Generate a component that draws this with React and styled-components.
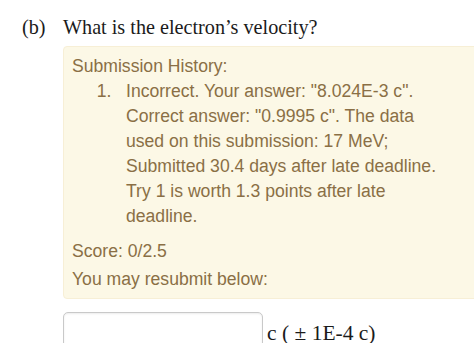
import React from 'react';
import styled, { createGlobalStyle } from 'styled-components';

const GlobalStyle = createGlobalStyle`
  html, body {
    margin: 0;
    padding: 0;
    background: #ffffff;
    overflow: hidden;
  }
  body {
    width: 474px;
    height: 343px;
  }
`;

const Page = styled.div`
  display: flex;
  padding: 15px 0 0 22px;
`;

const Label = styled.div`
  width: 41px;
  flex: none;
  font-family: "Liberation Serif", "Times New Roman", serif;
  font-size: 20.2px;
  line-height: 25px;
  color: #1b1b1b;
`;

const Content = styled.div`
  width: 440px;
  flex: none;
`;

const Question = styled.div`
  font-family: "Liberation Serif", "Times New Roman", serif;
  font-size: 20.2px;
  line-height: 25px;
  color: #1b1b1b;
  margin-bottom: 6px;
`;

const Notice = styled.div`
  background: #fcf8e6;
  border: 1px solid #f7efd6;
  border-radius: 4px;
  padding: 7px 8px 6px 8px;
  font-family: "Liberation Sans", Arial, sans-serif;
  font-size: 17.6px;
  line-height: 25px;
  color: #8a6f45;
`;

const Line = styled.div`
  margin-bottom: ${props => props.gap || 0}px;
`;

const History = styled.ol`
  margin: 0 0 10px 0;
  padding-left: 54px;
`;

const Item = styled.li`
  width: 318px;

  &::marker {
    content: counter(list-item) ".\\00a0\\00a0\\00a0";
  }
`;

const Answer = styled.div`
  display: flex;
  align-items: flex-start;
  gap: 4px;
  margin-top: 13px;
`;

const Field = styled.input`
  width: 200px;
  height: 36px;
  box-sizing: border-box;
  margin: 0;
  border: 1px solid #c9c9c9;
  border-radius: 5px;
  box-shadow: inset 0 1px 2px rgba(0, 0, 0, 0.08);
  background: #ffffff;
`;

const Unit = styled.span`
  margin-top: 9px;
  font-family: "Liberation Serif", "Times New Roman", serif;
  font-size: 21.5px;
  line-height: 25px;
  color: #1b1b1b;
`;

export default function App() {
  return (
    <>
      <GlobalStyle />
      <Page>
        <Label>(b)</Label>
        <Content>
          <Question>What is the electron’s velocity?</Question>
          <Notice>
            <Line>Submission History:</Line>
            <History>
              <Item>
                Incorrect. Your answer: "8.024E-3 c". Correct answer: "0.9995 c". The data
                used on this submission: 17 MeV; Submitted 30.4 days after late deadline.
                Try 1 is worth 1.3 points after late deadline.
              </Item>
            </History>
            <Line gap={3}>Score: 0/2.5</Line>
            <Line>You may resubmit below:</Line>
          </Notice>
          <Answer>
            <Field type="text" />
            <Unit>c ( ± 1E-4 c)</Unit>
          </Answer>
        </Content>
      </Page>
    </>
  );
}
